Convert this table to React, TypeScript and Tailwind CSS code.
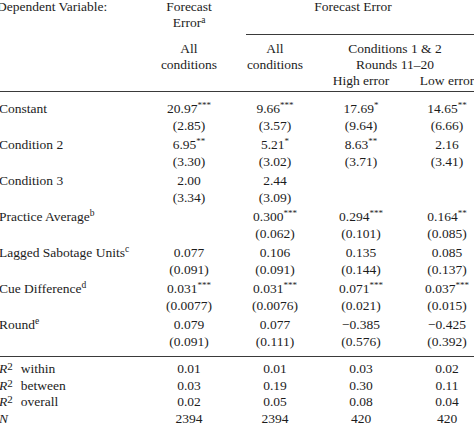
const rows = [
  { label: 'Constant', v: ['20.97***', '9.66***', '17.69*', '14.65**'], se: ['(2.85)', '(3.57)', '(9.64)', '(6.66)'] },
  { label: 'Condition 2', v: ['6.95**', '5.21*', '8.63**', '2.16'], se: ['(3.30)', '(3.02)', '(3.71)', '(3.41)'] },
  { label: 'Condition 3', v: ['2.00', '2.44', '', ''], se: ['(3.34)', '(3.09)', '', ''] },
  { label: 'Practice Average', sup: 'b', v: ['', '0.300***', '0.294***', '0.164**'], se: ['', '(0.062)', '(0.101)', '(0.085)'] },
  { label: 'Lagged Sabotage Units', sup: 'c', v: ['0.077', '0.106', '0.135', '0.085'], se: ['(0.091)', '(0.091)', '(0.144)', '(0.137)'] },
  { label: 'Cue Difference', sup: 'd', v: ['0.031***', '0.031***', '0.071***', '0.037***'], se: ['(0.0077)', '(0.0076)', '(0.021)', '(0.015)'] },
  { label: 'Round', sup: 'e', v: ['0.079', '0.077', '\u22120.385', '\u22120.425'], se: ['(0.091)', '(0.111)', '(0.576)', '(0.392)'] },
];

const stats = [
  { label: 'within', v: ['0.01', '0.01', '0.03', '0.02'] },
  { label: 'between', v: ['0.03', '0.19', '0.30', '0.11'] },
  { label: 'overall', v: ['0.02', '0.05', '0.08', '0.04'] },
];

const grid = 'grid grid-cols-[147px_86px_86px_86px_86px]';

function Value({ text }: { text: string }) {
  const m = text.match(/^([^*]*)(\*+)?$/);
  const num = m ? m[1] : text;
  const stars = m && m[2] ? m[2] : '';
  return (
    <span>
      {num}
      {stars && <span className="text-[9px] align-top leading-none relative top-[1px]">{stars}</span>}
    </span>
  );
}

function Sup({ children }: { children: string }) {
  return <span className="text-[9.5px] align-top leading-none relative top-[1px]">{children}</span>;
}

function Rule({ className = '' }: { className?: string }) {
  return <div className={`h-px bg-[#3a3a3a] ${className}`} />;
}

export default function App() {
  return (
    <div className="w-[474px] h-[424px] overflow-hidden bg-white text-[#1c1c1c] text-[13.5px] font-['Liberation_Serif','Times_New_Roman',serif]">
      <div className="-mt-[1px] -ml-[1px] w-[494px]">
        {/* header */}
        <div className={`${grid} leading-4`}>
          <div className="-ml-[2px]">Dependent Variable:</div>
          <div className="text-center">
            Forecast
            <br />
            Error<Sup>a</Sup>
          </div>
          <div className="col-span-3 text-center pr-[16px]">Forecast Error</div>
        </div>
        <div className={`${grid} mt-[3px]`}>
          <div className="col-span-2" />
          <div className="col-span-3 pl-[14px]">
            <Rule />
          </div>
        </div>
        <div className={`${grid} leading-4 mt-[6px]`}>
          <div />
          <div className="text-center">
            All
            <br />
            conditions
          </div>
          <div className="text-center">
            All
            <br />
            conditions
          </div>
          <div className="col-span-2 text-center pr-[18px]">
            Conditions 1 &amp; 2
            <br />
            Rounds 11&ndash;20
          </div>
          <div className="col-span-3" />
          <div className="text-center">High error</div>
          <div className="text-center">Low error</div>
        </div>
        <Rule className="mt-[2px]" />

        {/* body */}
        <div className="pt-[8px] leading-[17px]">
          {rows.map((r) => (
            <div key={r.label} className={`${grid} pb-[2px]`}>
              <div>
                {r.label}
                {r.sup && <Sup>{r.sup}</Sup>}
              </div>
              {r.v.map((v, i) => (
                <div key={i} className="text-center">
                  <Value text={v} />
                  <br />
                  {r.se[i]}
                </div>
              ))}
            </div>
          ))}
        </div>
        <Rule className="mt-[4px]" />

        <div className="pt-[4px] leading-[16.7px]">
          {stats.map((s) => (
            <div key={s.label} className={grid}>
              <div>
                <i>R</i>
                <span className="text-[11px] align-top leading-none">2</span>
                <span className="ml-[8px]">{s.label}</span>
              </div>
              {s.v.map((v, i) => (
                <div key={i} className="text-center">
                  {v}
                </div>
              ))}
            </div>
          ))}
          <div className={grid}>
            <div>
              <i>N</i>
            </div>
            {['2394', '2394', '420', '420'].map((v, i) => (
              <div key={i} className="text-center">
                {v}
              </div>
            ))}
          </div>
        </div>
      </div>
    </div>
  );
}
